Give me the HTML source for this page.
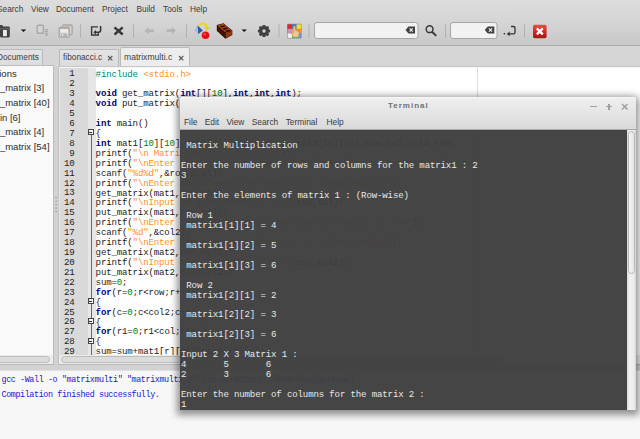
<!DOCTYPE html>
<html><head><meta charset="utf-8">
<style>
*{margin:0;padding:0;box-sizing:border-box}
html,body{width:640px;height:439px;overflow:hidden;background:#d2d2d2;font-family:"Liberation Sans",sans-serif;position:relative}
.abs{position:absolute}
#top{left:0;top:0;width:640px;height:45px;background:linear-gradient(#dcdcdc,#d6d6d6 45%,#c8c8c8)}
#topline{left:0;top:44.6px;width:640px;height:1px;background:#a8a8a8}
.menu{top:4px;font-size:8.3px;color:#3a3a3a;white-space:pre;line-height:10px}
.sep{top:24px;width:1px;height:14px;background:#b4b4b4}
#tabbar{left:0;top:46px;width:640px;height:21px;background:#d6d6d6}
.tab{height:18px;background:linear-gradient(#e4e4e4,#dcdcdc);border:1px solid #bababa;border-bottom:none;border-radius:2px 2px 0 0}
.stab{font-size:8.3px;color:#3e3e3e;white-space:pre;line-height:10px}
/* sidebar */
#side{left:0;top:65px;width:54px;height:300px;background:#f9f9f9;border-top:1px solid #bcbcbc;border-right:1px solid #bdbdbd;border-bottom:1px solid #b8b8b8;overflow:hidden}
.sym{font-size:9.5px;color:#2c2c2c;white-space:pre;line-height:11px;margin-top:0.8px}
/* editor */
#ed{left:58px;top:66px;width:582px;height:299px;background:#fff;border-left:1px solid #c2c2c2;border-bottom:1px solid #b8b8b8;overflow:hidden}
#edtop{left:0;top:0;width:582px;height:2px;background:linear-gradient(#c6c6c6 0,#c6c6c6 1px,#f6f6f6 1px)}
#gut{left:0;top:2px;width:29px;height:287px;background:linear-gradient(90deg,#e8e8e8 0,#e8e8e8 1.5px,#d9d9d9 1.5px)}
#fold{left:29px;top:2px;width:8px;height:287px;background:#e6e6e6}
.code{font-family:"Liberation Mono",monospace;font-size:9.1px;letter-spacing:-0.175px;line-height:9.922px;white-space:pre;color:#1c1c1c}
#lnum{left:-0.5px;top:3.4px;width:16px;text-align:right;color:#222}
#src{left:36.6px;top:3.5px}
.k{color:#00007f;font-weight:bold}
.s{color:#ff901e}
.n{color:#007f00}
.p{color:#007f7f}
.o{color:#301010}
#edscroll{left:2px;top:290px;width:441px;height:7px;background:#dcdcdc;border:1px solid #bcbcbc;border-radius:4px}
#sidescroll{left:-10px;top:290px;width:60px;height:7px;background:#dcdcdc;border:1px solid #bcbcbc;border-radius:4px}
.fbox{left:28.8px;width:6px;height:6px;border:1px solid #444;background:#f4f4f4}
.fbox::after{content:"";position:absolute;left:0.5px;top:1.5px;width:3px;height:1px;background:#333}
.fline{left:31.5px;width:1px;background:#6a6a6a}
/* message */
#msg{left:0;top:370px;width:640px;height:69px;background:#f7f7f7;border-top:1px solid #e2e2e2}
.mtxt{font-family:"Liberation Mono",monospace;font-size:8.4px;letter-spacing:-0.38px;color:#2020d4;white-space:pre;line-height:10px}
/* terminal */
#shadow{left:180px;top:97px;width:456px;height:313px;border-radius:3px 3px 0 0;box-shadow:0 2px 7px 3px rgba(0,0,0,.42)}
#term{left:180px;top:97px;width:456px;height:313px;border-radius:3px 3px 0 0;overflow:hidden}
#ttitle{left:0;top:0;width:456px;height:33px;background:linear-gradient(#efefef,#e4e4e4 50%,#d9d9d9);border-top:1px solid #f8f8f8}
#tmenu{left:0;top:17px;width:456px;height:16px;border-bottom:1px solid #a8a8a8}
#tbody{left:0;top:33px;width:447px;height:280px;background:rgba(62,62,62,.965)}
#tscroll{left:447px;top:33px;width:9px;height:280px;background:linear-gradient(90deg,#d8d8d8,#f0f0f0 25%,#ececec 80%,#cfcfcf)}
#tslider{left:448.2px;top:33.5px;width:7px;height:143px;border:1px solid #b8b8b8;border-radius:3.5px;background:linear-gradient(90deg,#f6f6f6,#e4e4e4)}
.tt{font-family:"Liberation Mono",monospace;font-size:9.1px;letter-spacing:-0.16px;line-height:9.93px;white-space:pre;color:#e8e8e8}
.tm{font-size:8.4px;color:#3a3a3a;white-space:pre;line-height:10px;top:3px}
</style></head><body>
<div id="top" class="abs"></div>
<div id="topline" class="abs"></div>
<div class="abs menu" style="left:-3px">Search</div>
<div class="abs menu" style="left:31px">View</div>
<div class="abs menu" style="left:56px">Document</div>
<div class="abs menu" style="left:102px">Project</div>
<div class="abs menu" style="left:136.5px">Build</div>
<div class="abs menu" style="left:163px">Tools</div>
<div class="abs menu" style="left:190px">Help</div>

<!-- toolbar icons -->
<svg class="abs" style="left:0;top:0" width="640" height="45" viewBox="0 0 640 45">
  <!-- open folder (clipped) -->
  <path d="M-3 25h5l1.5 1.5H9.2l.6 .8V36.5l-1 1.1H1l-1-1.1H-3z" fill="#424242"/>
  <rect x="-3" y="28.2" width="12.8" height="1.1" fill="#6a6a6a"/>
  <rect x="3" y="30" width="3.9" height="6.2" fill="#ececec"/>
  <path d="M20.8 29.5h5.4l-2.7 2.6z" fill="#111"/>
  <!-- save disabled -->
  <rect x="37.2" y="25.2" width="6.2" height="8" rx="1" fill="#d4d4d4" stroke="#a8a8a8" stroke-width="1.4"/>
  <path d="M45 29h3v1.3h-3zM45 31h3v1.3h-3zM44.6 33.2h3.9l-1.95 3.6z" fill="#a8a8a8"/>
  <!-- save all disabled -->
  <rect x="62.6" y="24.9" width="9.6" height="9.6" rx="1.2" fill="#d2d2d2" stroke="#aaa" stroke-width="1.3"/>
  <rect x="63.4" y="25.2" width="8" height="1.2" fill="#b4aca4"/>
  <rect x="59.2" y="27.4" width="10" height="9.8" rx="1.2" fill="#d6d6d6" stroke="#a6a6a6" stroke-width="1.3"/>
  <rect x="60" y="27.7" width="8.4" height="1.2" fill="#b8a8a0"/>
  <rect x="60.4" y="29.2" width="7.6" height="3.4" fill="#ececec"/>
  <rect x="61.2" y="33.6" width="5.6" height="3" fill="#b0b0b0"/>
  <rect x="62" y="34.2" width="1.4" height="1.8" fill="#e8e8e8"/>
  <rect x="80" y="24" width="1" height="14" fill="#b2b2b2"/>
  <!-- revert -->
  <path d="M98 26.9H91.6V35H98.3V33.2" fill="none" stroke="#363636" stroke-width="1.4"/>
  <path d="M100.6 25.9v4.4q0 1.9-1.9 1.9H95" fill="none" stroke="#363636" stroke-width="1.5"/>
  <path d="M93.4 32.2l2.6-2.3v4.6z" fill="#363636"/>
  <!-- close X -->
  <path d="M114.5 27.3l8.2 7.2M122.7 27.3l-8.2 7.2" stroke="#383838" stroke-width="2.4"/>
  <rect x="133" y="24" width="1" height="14" fill="#b2b2b2"/>
  <!-- back / forward disabled -->
  <path d="M144.5 30.8l4.2-3.6v2.2h5.2v2.8h-5.2v2.2z" fill="#b4b4b4"/>
  <path d="M176 30.6l-4.2-3.6v2.2h-5.2v2.8h5.2v2.2z" fill="#b4b4b4"/>
  <rect x="186" y="24" width="1" height="14" fill="#b2b2b2"/>
  <!-- compile -->
  <path d="M195 30.2l2.6-4.6 5.3 5-4.6 3.3z" fill="#2a5aa8"/>
  <path d="M195 30.2l2.6-4.6 0.7 8.3z" fill="#a8cef2"/>
  <path d="M198.8 26.2q1.6-2.9 4.6-2.6q3 .4 3.6 3.4" fill="none" stroke="#f0d428" stroke-width="2.1"/>
  <path d="M204.5 27.2l5-0.2-2.6 3.9z" fill="#e8c818"/>
  <circle cx="205.5" cy="35.2" r="3.8" fill="#e41010"/>
  <circle cx="204.6" cy="34.2" r="1.4" fill="#f04040"/>
  <!-- build brick -->
  <path d="M216.8 25l6.7-1.8 8.8 7.3v4.5l-6.8 3.7-8.7-8z" fill="#2a0c02"/>
  <path d="M217.3 25.4l6.2-1.6 8.3 6.9-6.5 1.6z" fill="#b44c14"/>
  <path d="M225.6 32.6l6.4-1.8v4l-6.4 3.4z" fill="#8c360c"/>
  <path d="M217.4 26.3l7.6 6.6v5l-7.6-7z" fill="#3e1204"/>
  <path d="M219.8 26.2l4.2-1 1.6 1.3-4.2 1zM222.4 28.5l4.2-1 1.6 1.3-4.2 1zM225 30.8l4.2-1 1.6 1.3-4.2 1z" fill="#1e0800"/>
  <path d="M241.5 29.4h5.4l-2.7 2.6z" fill="#111"/>
  <!-- gear -->
  <g transform="translate(264 31)">
    <circle r="4.8" fill="#3c3c3c"/>
    <g fill="#404040">
      <rect x="-1.5" y="-6.1" width="3" height="12.2" rx="0.9"/>
      <rect x="-1.5" y="-6.1" width="3" height="12.2" rx="0.9" transform="rotate(45)"/>
      <rect x="-1.5" y="-6.1" width="3" height="12.2" rx="0.9" transform="rotate(90)"/>
      <rect x="-1.5" y="-6.1" width="3" height="12.2" rx="0.9" transform="rotate(135)"/>
    </g>
    <circle r="1.7" fill="#cfcfcf"/>
  </g>
  <rect x="278.5" y="24" width="1" height="14" fill="#b2b2b2"/>
  <!-- color chooser -->
  <rect x="287" y="23.8" width="14.6" height="14.6" rx="1.2" fill="#888"/>
  <rect x="287.6" y="24.4" width="4.5" height="4.5" fill="#e02828"/>
  <rect x="292.1" y="24.4" width="4.5" height="4.5" fill="#3878d8"/>
  <rect x="296.6" y="24.4" width="4.5" height="4.5" fill="#f0e030"/>
  <rect x="287.6" y="28.9" width="4.5" height="4.5" fill="#c890c8"/>
  <rect x="292.1" y="28.9" width="4.5" height="4.5" fill="#e8a050"/>
  <rect x="296.6" y="28.9" width="4.5" height="4.5" fill="#f08838"/>
  <rect x="287.6" y="33.4" width="4.5" height="4.5" fill="#f0f0e8"/>
  <rect x="292.1" y="33.4" width="4.5" height="4.5" fill="#50b848"/>
  <rect x="296.6" y="33.4" width="4.5" height="4.5" fill="#6898d8"/>
  <path d="M293.3 26.5q1-1 2 0v4l3 0.8q1 .5.8 2l-.8 3.8h-5l-2-3.5q0-1.2 1.2-.8l.8.6z" fill="#f2c890" stroke="#c09060" stroke-width=".5"/>
  <rect x="308.5" y="24" width="1" height="14" fill="#b2b2b2"/>
  <!-- search entry -->
  <rect x="314.5" y="22.5" width="103.5" height="16" rx="2.5" fill="#f2f2f2" stroke="#a6a6a6"/>
  <path d="M405.5 30l3-3.4h6.5v6.8h-6.5z" fill="#404040"/>
  <path d="M409.6 28.4l3.2 3.2M412.8 28.4l-3.2 3.2" stroke="#f3f3f3" stroke-width="1.2"/>
  <circle cx="429.6" cy="29.2" r="3.4" fill="none" stroke="#383838" stroke-width="1.5"/>
  <path d="M432 31.8l4.3 4.1" stroke="#383838" stroke-width="1.9"/>
  <rect x="445" y="24" width="1" height="14" fill="#b2b2b2"/>
  <!-- goto entry -->
  <rect x="450.5" y="22.5" width="46.5" height="16" rx="2.5" fill="#f2f2f2" stroke="#a6a6a6"/>
  <path d="M484.8 30l3-3.4h6.5v6.8h-6.5z" fill="#404040"/>
  <path d="M488.9 28.4l3.2 3.2M492.1 28.4l-3.2 3.2" stroke="#f3f3f3" stroke-width="1.2"/>
  <!-- jump -->
  <rect x="503.7" y="33" width="1.4" height="1.4" fill="#333"/>
  <path d="M511 26.5h2.6q1.4 0 1.4 1.4v4.6q0 1.4-1.4 1.4h-5" fill="none" stroke="#333" stroke-width="1.3"/>
  <path d="M506.8 33.9l2.8-2.4v4.8z" fill="#333"/>
  <rect x="524" y="24" width="1" height="14" fill="#b2b2b2"/>
  <!-- quit -->
  <defs><linearGradient id="rq" x1="0" y1="0" x2="0" y2="1"><stop offset="0" stop-color="#f04a3a"/><stop offset="1" stop-color="#a81410"/></linearGradient></defs>
  <rect x="533" y="24.8" width="13.6" height="13.4" rx="1.6" fill="url(#rq)"/>
  <path d="M536.8 28.4l6 6M542.8 28.4l-6 6" stroke="#fff" stroke-width="2.3"/>
</svg>

<div id="tabbar" class="abs"></div>
<svg class="abs" style="left:55px;top:196px" width="3" height="20"><g fill="#8c8c8c"><rect x="0.5" y="1" width="1.2" height="1.2"/><rect x="0.5" y="4.5" width="1.2" height="1.2"/><rect x="0.5" y="8" width="1.2" height="1.2"/><rect x="0.5" y="11.5" width="1.2" height="1.2"/><rect x="0.5" y="15" width="1.2" height="1.2"/></g></svg>
<div class="abs tab" style="left:-10px;top:48.6px;width:53px;height:17.4px"></div>
<div class="abs stab" style="left:-3px;top:52px">Documents</div>
<div class="abs tab" style="left:59px;top:48.8px;width:60px;height:17.2px"></div>
<div class="abs stab" style="left:63px;top:52px">fibonacci.c</div>
<svg class="abs" style="left:107px;top:54.5px" width="6" height="6"><path d="M1 1l4.3 4.3M5.3 1l-4.3 4.3" stroke="#5a5a5a" stroke-width="1.2"/></svg>
<div class="abs tab" style="left:120px;top:47px;width:70px;height:21px;background:#ededed"></div>
<div class="abs stab" style="left:124px;top:52px;font-size:8.6px">matrixmulti.c</div>
<svg class="abs" style="left:178px;top:54.5px" width="6" height="6"><path d="M1 1l4.3 4.3M5.3 1l-4.3 4.3" stroke="#5a5a5a" stroke-width="1.2"/></svg>

<div id="side" class="abs">
<div class="abs sym" style="left:-24.5px;top:1px">Functions</div>
<div class="abs sym" style="left:-13.3px;top:15.6px">get_matrix [3]</div>
<div class="abs sym" style="left:-13.3px;top:30.2px">get_matrix [40]</div>
<div class="abs sym" style="left:-13.3px;top:44.8px">main [6]</div>
<div class="abs sym" style="left:-13.3px;top:59.4px">put_matrix [4]</div>
<div class="abs sym" style="left:-13.3px;top:74px">put_matrix [54]</div>
<div class="abs" style="left:0;top:289px;width:54px;height:9px;background:#ececec"></div><div id="sidescroll" class="abs"></div>
</div>

<div id="ed" class="abs">
  <div id="edtop" class="abs"></div>
  <div id="gut" class="abs"></div>
  <div id="fold" class="abs"></div>
  <div class="abs" style="left:418px;top:2px;width:1px;height:287px;background:#c8ecc8"></div>
  <div id="lnum" class="abs code">1
2
3
4
5
6
7
8
9
10
11
12
13
14
15
16
17
18
19
20
21
22
23
24
25
26
27
28
29</div>
  <div class="abs fbox" style="top:63px"></div>
  <div class="abs fline" style="top:69px;height:166px"></div>
  <div class="abs fbox" style="top:232px"></div>
  <div class="abs fline" style="top:238px;height:14px"></div>
  <div class="abs fbox" style="top:252px"></div>
  <div class="abs fline" style="top:258px;height:14px"></div>
  <div class="abs fbox" style="top:272px"></div>
  <div class="abs fline" style="top:278px;height:12px"></div>
  <div id="src" class="abs code"><span class="p">#include</span> <span class="s">&lt;stdio.h&gt;</span>

<span class="k">void</span> get_matrix<span class="o">(</span><span class="k">int</span><span class="o">[][</span><span class="n">10</span><span class="o">],</span><span class="k">int</span><span class="o">,</span><span class="k">int</span><span class="o">,</span><span class="k">int</span><span class="o">);</span>
<span class="k">void</span> put_matrix<span class="o">(</span><span class="k">int</span><span class="o">[][</span><span class="n">10</span><span class="o">],</span><span class="k">int</span><span class="o">,</span><span class="k">int</span><span class="o">,</span><span class="k">int</span><span class="o">);</span>

<span class="k">int</span> main<span class="o">()</span>
<span class="o">{</span>
<span class="k">int</span> mat1<span class="o">[</span><span class="n">10</span><span class="o">][</span><span class="n">10</span><span class="o">],</span>mat2<span class="o">[</span><span class="n">10</span><span class="o">][</span><span class="n">10</span><span class="o">],</span>r<span class="o">,</span>c<span class="o">,</span>r1<span class="o">,</span> mat3<span class="o">[</span><span class="n">10</span><span class="o">][</span><span class="n">10</span><span class="o">],</span>row<span class="o">,</span>col<span class="o">,</span>col2<span class="o">,</span>sum<span class="o">;</span>
printf<span class="o">(</span><span class="s">"\n Matrix Multiplication\n"</span><span class="o">);</span>
printf<span class="o">(</span><span class="s">"\nEnter the number of rows and columns for the matrix1 : "</span><span class="o">);</span>
scanf<span class="o">(</span><span class="s">"%d%d"</span><span class="o">,&amp;</span>row<span class="o">,&amp;</span>col<span class="o">);</span>
printf<span class="o">(</span><span class="s">"\nEnter the elements of matrix 1 : (Row-wise)\n"</span><span class="o">);</span>
get_matrix<span class="o">(</span>mat1<span class="o">,</span>row<span class="o">,</span>col<span class="o">);</span>
printf<span class="o">(</span><span class="s">"\nInput %d X %d Matrix 1 :\n"</span><span class="o">,</span>row<span class="o">,</span>col<span class="o">);</span>
put_matrix<span class="o">(</span>mat1<span class="o">,</span>row<span class="o">,</span>col<span class="o">);</span>
printf<span class="o">(</span><span class="s">"\nEnter the number of columns for the matrix 2 : \n"</span><span class="o">);</span>
scanf<span class="o">(</span><span class="s">"%d"</span><span class="o">,&amp;</span>col2<span class="o">);</span>
printf<span class="o">(</span><span class="s">"\nEnter the elements of matrix 2 : (Row-wise)\n"</span><span class="o">);</span>
get_matrix<span class="o">(</span>mat2<span class="o">,</span>col<span class="o">,</span>col2<span class="o">);</span>
printf<span class="o">(</span><span class="s">"\nInput %d X %d Matrix 2 :\n"</span><span class="o">,</span>col<span class="o">,</span>col2<span class="o">);</span>
put_matrix<span class="o">(</span>mat2<span class="o">,</span>col<span class="o">,</span>col2<span class="o">);</span>
sum<span class="o">=</span><span class="n">0</span><span class="o">;</span>
<span class="k">for</span><span class="o">(</span>r<span class="o">=</span><span class="n">0</span><span class="o">;</span>r<span class="o">&lt;</span>row<span class="o">;</span>r<span class="o">++)</span>
<span class="o">{</span>
<span class="k">for</span><span class="o">(</span>c<span class="o">=</span><span class="n">0</span><span class="o">;</span>c<span class="o">&lt;</span>col2<span class="o">;</span>c<span class="o">++)</span>
<span class="o">{</span>
<span class="k">for</span><span class="o">(</span>r1<span class="o">=</span><span class="n">0</span><span class="o">;</span>r1<span class="o">&lt;</span>col<span class="o">;</span>r1<span class="o">++)</span>
<span class="o">{</span>
sum<span class="o">=</span>sum<span class="o">+</span>mat1<span class="o">[</span>r<span class="o">][</span>r1<span class="o">]*</span>mat2<span class="o">[</span>r1<span class="o">][</span>c<span class="o">];</span></div>
  <div class="abs" style="left:0;top:289px;width:582px;height:9px;background:#ececec"></div><div id="edscroll" class="abs"></div>
</div>

<div id="msg" class="abs">
  <div class="abs mtxt" style="left:1.5px;top:3.8px">gcc -Wall -o "matrixmulti" "matrixmulti.c" (in directory: /home/sanjay/code)</div>
  <div class="abs mtxt" style="left:1.5px;top:18.5px">Compilation finished successfully.</div>
</div>

<div id="shadow" class="abs"></div>
<div id="term" class="abs">
  <div id="ttitle" class="abs"></div>
  <div class="abs" style="left:208px;top:4.4px;font-size:8px;font-weight:bold;letter-spacing:1px;color:#727272;line-height:10px">Terminal</div>
  <div class="abs" style="left:409.5px;top:9px;width:7px;height:1.3px;background:#a0a0a0"></div>
  <div class="abs" style="left:425.8px;top:8.7px;width:6px;height:1.6px;background:#a0a0a0"></div><div class="abs" style="left:428px;top:6.5px;width:1.6px;height:6px;background:#a0a0a0"></div>
  <svg class="abs" style="left:441.2px;top:5.5px" width="8" height="8"><path d="M1 1l5.5 5.5M6.5 1l-5.5 5.5" stroke="#a0a0a0" stroke-width="1.5"/></svg>
  <div id="tmenu" class="abs">
    <div class="abs tm" style="left:4px">File</div>
    <div class="abs tm" style="left:24.7px">Edit</div>
    <div class="abs tm" style="left:46.4px">View</div>
    <div class="abs tm" style="left:71.7px">Search</div>
    <div class="abs tm" style="left:105.7px">Terminal</div>
    <div class="abs tm" style="left:146.5px">Help</div>
  </div>
  <div id="tbody" class="abs">
  <div class="abs tt" style="left:1px;top:1.5px">
 Matrix Multiplication

Enter the number of rows and columns for the matrix1 : 2
3

Enter the elements of matrix 1 : (Row-wise)

 Row 1
 matrix1[1][1] = 4

 matrix1[1][2] = 5

 matrix1[1][3] = 6

 Row 2
 matrix1[2][1] = 2

 matrix1[2][2] = 3

 matrix1[2][3] = 6

Input 2 X 3 Matrix 1 :
4       5       6
2       3       6

Enter the number of columns for the matrix 2 :
1</div>
  </div>
  <div id="tscroll" class="abs"></div><div id="tslider" class="abs"></div>
</div>
</body></html>
